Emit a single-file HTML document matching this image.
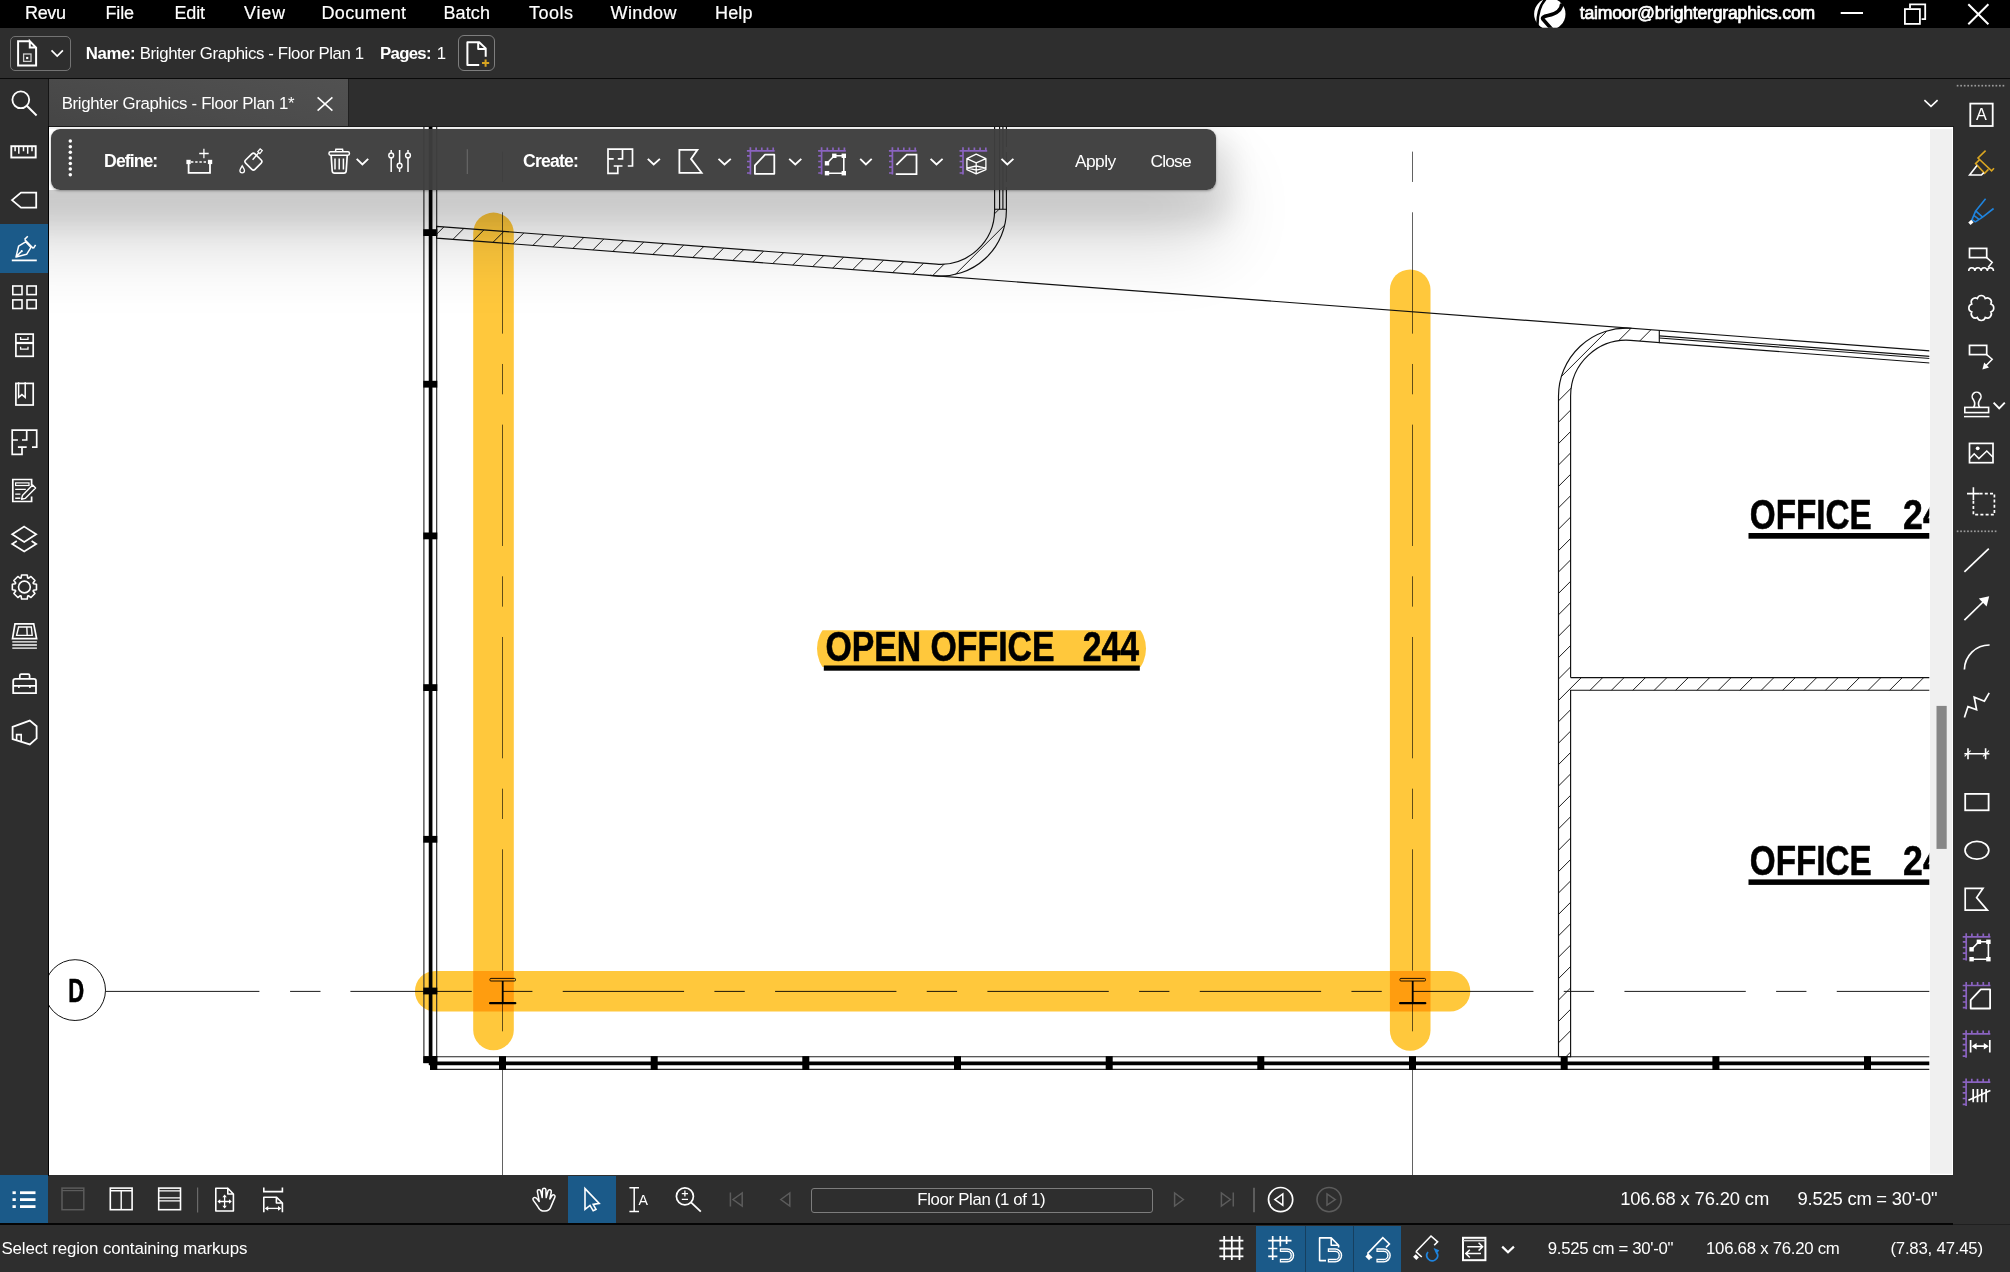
<!DOCTYPE html>
<html lang="en"><head><meta charset="utf-8"><title>Revu - Brighter Graphics - Floor Plan 1</title>
<style>
html,body{margin:0;padding:0}
body{width:2010px;height:1272px;overflow:hidden;background:#2e2e2e;position:relative;font-family:"Liberation Sans",sans-serif;color:#fff}
.a{position:absolute}
.t{position:absolute;line-height:1;white-space:pre}
#menubar{left:0;top:0;width:2010px;height:28px;background:#000}
#row2{left:0;top:28px;width:2010px;height:50px;background:#2e2e2e}
#sep1{left:0;top:78px;width:2010px;height:1.4px;background:#0a0a0a}
#tab{left:49px;top:79.2px;width:299.3px;height:47.8px;background:linear-gradient(15deg,#454545,#4b4b4b 45%,#515151);border-right:1px solid #202020;box-sizing:content-box}
#tabL{left:48px;top:79.2px;width:1px;height:47.8px;background:#151515}
.btn{border:1.2px solid #6b6b6b;border-radius:5px;box-sizing:border-box}
#doc{left:49px;top:127px;width:1904px;height:1048px;background:#fff;overflow:hidden}
#docborderL{left:48px;top:126px;width:1px;height:1050px;background:#000}
#docborderT{left:48px;top:126px;width:1906px;height:1px;background:#1a1a1a}
#fbar{left:51px;top:129.2px;width:1165px;height:60.4px;border-radius:9px;background:rgba(62,62,62,0.97);box-shadow:0 1px 2.5px rgba(0,0,0,0.35)}
#fshadow{left:-80px;top:2.2px;width:1247px;height:60.4px;border-radius:9px;box-shadow:0 20px 30px 14px rgba(0,0,0,0.115), 0 48px 74px 5px rgba(0,0,0,0.16)}
.blue{background:#1b5a89}
#navline{left:0;top:1223.3px;width:1953px;height:1.9px;background:#050505}
#navline2{left:1953px;top:1224.3px;width:57px;height:1.1px;background:#1f1f1f}
#ui{left:0;top:0;pointer-events:none}
</style></head><body>

<div class="a" id="menubar"></div><div class="a" id="row2"></div><div class="a" id="sep1"></div><div class="a" id="tab"></div><div class="a" id="tabL"></div>
<div class="a btn" style="left:10.1px;top:35.5px;width:61px;height:35px;border-width:1.4px;border-color:#737373"></div>
<div class="a btn" style="left:458.2px;top:35.4px;width:36.8px;height:35.6px;border-width:1.7px;border-color:#7e7e7e;border-radius:6px"></div>
<div class="a blue" style="left:0;top:224.3px;width:48px;height:48.3px"></div>
<div class="a blue" style="left:0;top:1175px;width:48.4px;height:48.5px"></div>
<div class="a blue" style="left:568px;top:1175.5px;width:48px;height:47.5px"></div>
<div class="a blue" style="left:1256.4px;top:1225.5px;width:145.1px;height:46.5px"></div>
<div class="a" style="left:1304.7px;top:1225.5px;width:1px;height:46.5px;background:#163f5f"></div>
<div class="a" style="left:1352.8px;top:1225.5px;width:1px;height:46.5px;background:#163f5f"></div>
<div class="a" id="navline"></div><div class="a" id="navline2"></div>
<div class="a" style="left:811.2px;top:1187.6px;width:341.8px;height:25px;border:1.7px solid #7d7d7d;border-radius:3px;box-sizing:border-box"></div>
<div class="a" id="docborderT"></div><div class="a" id="docborderL"></div>
<div class="a" id="doc">
<svg width="1904" height="1048" viewBox="49 127 1904 1048" style="position:absolute;left:0;top:0;display:block" font-family="'Liberation Sans',sans-serif">
<defs>
<clipPath id="cpPage"><rect x="49" y="127" width="1880.3" height="1048"/></clipPath>
<clipPath id="cpTop"><path d="M436.6 226.40 L936.43 264.15 A54.1 54.1 0 0 0 994.6 210.20 L994.6 209.2 L1006.4 209.2 L1006.4 210.20 A65.9 65.9 0 0 1 935.54 275.91 L436.6 238.10 Z"/></clipPath>
<clipPath id="cpR"><path d="M1558.5 1056.7 L1558.5 396.10 A68.0 68.0 0 0 1 1631.52 328.29 L1659.30 330.41 L1659.30 342.55 L1630.61 340.36 A55.9 55.9 0 0 0 1570.6 396.10 L1570.6 677.6 L1935 677.6 L1935 690.2 L1570.6 690.2 L1570.6 1056.7 Z"/></clipPath>
<clipPath id="cpHL"><rect x="800" y="630.3" width="360" height="36.6"/></clipPath>
</defs>
<rect x="49" y="127" width="1904" height="1048" fill="#fff"/>
<g clip-path="url(#cpPage)">
<g style="mix-blend-mode:multiply" stroke="#ffc83c" stroke-width="40.6" stroke-linecap="round" fill="none">
<path d="M493.5 232.9 L493.5 1029.9" style="mix-blend-mode:multiply"/>
<path d="M1410.2 289.7 L1410.2 1030.5" style="mix-blend-mode:multiply"/>
<path d="M435.2 991.2 L1450 991.2" style="mix-blend-mode:multiply"/>
<path d="M850.5 648.6 L1112.5 648.6" stroke-width="67" clip-path="url(#cpHL)"/>
</g>
<path d="M502.5 0 L502.5 1175" stroke="#000" stroke-width="0.62" stroke-dasharray="121.35 30.33 30.33 30.33" stroke-dashoffset="0.05" fill="none"/>
<path d="M1412.5 0 L1412.5 1175" stroke="#000" stroke-width="0.62" stroke-dasharray="121.35 30.33 30.33 30.33" stroke-dashoffset="0.05" fill="none"/>
<path d="M105.7 991.4 L259.4 991.4" stroke="#000" stroke-width="0.9" fill="none"/>
<path d="M350.4 991.4 L1935 991.4" stroke="#000" stroke-width="0.9" stroke-dasharray="121.35 30.33 30.33 30.33" fill="none"/>
<path d="M290.1 991.4 L320.5 991.4" stroke="#000" stroke-width="0.9" fill="none"/>
<circle cx="75.1" cy="990.1" r="30.4" fill="#fff" stroke="#111" stroke-width="1"/>
<text transform="translate(68.20,1001.90) scale(0.6673,1)" font-size="33.00" font-weight="bold" fill="#000" stroke="#000" stroke-width="0.6" stroke-linejoin="round" style="white-space:pre">D</text>
<g stroke="#000" fill="none">
<path d="M423.9 127 L423.9 1063 M436.7 127 L436.7 1057" stroke-width="1.1" stroke="#222"/>
<path d="M430.6 127 L430.6 1065" stroke-width="3.7"/>
<path d="M424 1056.7 L1935 1056.7 M431 1069.4 L1935 1069.4" stroke-width="1.1" stroke="#222"/>
<path d="M429 1063.3 L1935 1063.3" stroke-width="3.7"/>
</g>
<rect x="423.3" y="229.2" width="14" height="6.8" fill="#000"/>
<rect x="423.3" y="380.8" width="14" height="6.8" fill="#000"/>
<rect x="423.3" y="532.5" width="14" height="6.8" fill="#000"/>
<rect x="423.3" y="684.2" width="14" height="6.8" fill="#000"/>
<rect x="423.3" y="835.9" width="14" height="6.8" fill="#000"/>
<rect x="423.3" y="987.6" width="14" height="6.8" fill="#000"/>
<rect x="499.0" y="1056.2" width="7" height="13.8" fill="#000"/>
<rect x="650.7" y="1056.2" width="7" height="13.8" fill="#000"/>
<rect x="802.3" y="1056.2" width="7" height="13.8" fill="#000"/>
<rect x="954.0" y="1056.2" width="7" height="13.8" fill="#000"/>
<rect x="1105.7" y="1056.2" width="7" height="13.8" fill="#000"/>
<rect x="1257.3" y="1056.2" width="7" height="13.8" fill="#000"/>
<rect x="1409.0" y="1056.2" width="7" height="13.8" fill="#000"/>
<rect x="1560.7" y="1056.2" width="7" height="13.8" fill="#000"/>
<rect x="1712.4" y="1056.2" width="7" height="13.8" fill="#000"/>
<rect x="1864.0" y="1056.2" width="7" height="13.8" fill="#000"/>
<rect x="423.3" y="1056.2" width="14" height="7" fill="#000"/>
<rect x="430" y="1056.2" width="7.3" height="13.8" fill="#000"/>
<rect x="489.9" y="978.4" width="25.6" height="2.6" fill="none" stroke="#000" stroke-width="0.9" rx="1"/>
<path d="M490.1 1003.2 L515.3 1003.2" stroke="#000" stroke-width="2.2" stroke-linecap="round"/>
<path d="M502.7 981 L502.7 1003" stroke="#000" stroke-width="1.8"/>
<rect x="1399.9" y="978.4" width="25.6" height="2.6" fill="none" stroke="#000" stroke-width="0.9" rx="1"/>
<path d="M1400.1 1003.2 L1425.3 1003.2" stroke="#000" stroke-width="2.2" stroke-linecap="round"/>
<path d="M1412.7 981 L1412.7 1003" stroke="#000" stroke-width="1.8"/>
<g stroke="#111" stroke-width="1.15" fill="none">
<path d="M436.6 226.40 L936.43 264.15 A54.1 54.1 0 0 0 994.6 210.20 L994.6 209.2 L1006.4 209.2 L1006.4 210.20 A65.9 65.9 0 0 1 935.54 275.91 L436.6 238.10 Z"/>
<path d="M994.6 127 L994.6 209.2 M999.6 127 L999.6 209.2 M1002.9 127 L1002.9 209.2"/>
<path d="M1006.4 127 L1006.4 209.2" stroke-dasharray="30 5" stroke-dashoffset="10"/>
<path d="M930 275.35 L1935 351.23"/>
<path d="M1558.5 1056.7 L1558.5 396.10 A68.0 68.0 0 0 1 1631.52 328.29"/>
<path d="M1570.6 677.6 L1570.6 396.10 A55.9 55.9 0 0 1 1630.61 340.36 L1659.30 342.55 L1659.30 330.41"/>
<path d="M1659.30 335.91 L1935 356.73"/>
<path d="M1659.30 338.01 L1935 358.83"/>
<path d="M1659.30 342.56 L1935 363.38"/>
<path d="M1570.6 677.6 L1935 677.6 M1935 690.2 L1570.6 690.2 L1570.6 1056.7 L1558.5 1056.7"/>
</g>
<g clip-path="url(#cpTop)" stroke="#111" stroke-width="0.95">
<path d="M349.30 300 L499.30 150"/>
<path d="M370.80 300 L520.80 150"/>
<path d="M392.30 300 L542.30 150"/>
<path d="M413.80 300 L563.80 150"/>
<path d="M435.30 300 L585.30 150"/>
<path d="M456.80 300 L606.80 150"/>
<path d="M478.30 300 L628.30 150"/>
<path d="M499.80 300 L649.80 150"/>
<path d="M521.30 300 L671.30 150"/>
<path d="M542.80 300 L692.80 150"/>
<path d="M564.30 300 L714.30 150"/>
<path d="M585.80 300 L735.80 150"/>
<path d="M607.30 300 L757.30 150"/>
<path d="M628.80 300 L778.80 150"/>
<path d="M650.30 300 L800.30 150"/>
<path d="M671.80 300 L821.80 150"/>
<path d="M693.30 300 L843.30 150"/>
<path d="M714.80 300 L864.80 150"/>
<path d="M736.30 300 L886.30 150"/>
<path d="M757.80 300 L907.80 150"/>
<path d="M779.30 300 L929.30 150"/>
<path d="M800.80 300 L950.80 150"/>
<path d="M822.30 300 L972.30 150"/>
<path d="M843.80 300 L993.80 150"/>
<path d="M865.30 300 L1015.30 150"/>
<path d="M886.80 300 L1036.80 150"/>
<path d="M908.30 300 L1058.30 150"/>
<path d="M929.80 300 L1079.80 150"/>
<path d="M951.30 300 L1101.30 150"/>
<path d="M972.80 300 L1122.80 150"/>
<path d="M994.30 300 L1144.30 150"/>
<path d="M1015.80 300 L1165.80 150"/>
</g>
<g clip-path="url(#cpR)" stroke="#111" stroke-width="0.95">
<path d="M1550 323.70 L1573.70 300"/>
<path d="M1550 345.10 L1595.10 300"/>
<path d="M1550 366.50 L1616.50 300"/>
<path d="M1550 387.90 L1637.90 300"/>
<path d="M1550 409.30 L1659.30 300"/>
<path d="M1550 430.70 L1680.70 300"/>
<path d="M1550 452.10 L1702.10 300"/>
<path d="M1550 473.50 L1723.50 300"/>
<path d="M1550 494.90 L1744.90 300"/>
<path d="M1550 516.30 L1766.30 300"/>
<path d="M1550 537.70 L1787.70 300"/>
<path d="M1550 559.10 L1809.10 300"/>
<path d="M1550 580.50 L1830.50 300"/>
<path d="M1550 601.90 L1851.90 300"/>
<path d="M1550 623.30 L1873.30 300"/>
<path d="M1550 644.70 L1894.70 300"/>
<path d="M1550 666.10 L1916.10 300"/>
<path d="M1550 687.50 L1937.50 300"/>
<path d="M1550 708.90 L1958.90 300"/>
<path d="M1550 730.30 L1980.30 300"/>
<path d="M1550 751.70 L2001.70 300"/>
<path d="M1550 773.10 L2023.10 300"/>
<path d="M1550 794.50 L2044.50 300"/>
<path d="M1550 815.90 L2065.90 300"/>
<path d="M1550 837.30 L2087.30 300"/>
<path d="M1550 858.70 L2108.70 300"/>
<path d="M1550 880.10 L2130.10 300"/>
<path d="M1550 901.50 L2151.50 300"/>
<path d="M1550 922.90 L2172.90 300"/>
<path d="M1550 944.30 L2194.30 300"/>
<path d="M1550 965.70 L2215.70 300"/>
<path d="M1550 987.10 L2237.10 300"/>
<path d="M1550 1008.50 L2258.50 300"/>
<path d="M1550 1029.90 L2279.90 300"/>
<path d="M1550 1051.30 L2301.30 300"/>
<path d="M1550 1072.70 L2322.70 300"/>
<path d="M1550 1094.10 L2344.10 300"/>
<path d="M1550 1115.50 L2365.50 300"/>
<path d="M1550 1136.90 L2386.90 300"/>
<path d="M1550 1158.30 L2408.30 300"/>
<path d="M1550 1179.70 L2429.70 300"/>
<path d="M1550 1201.10 L2451.10 300"/>
<path d="M1550 1222.50 L2472.50 300"/>
<path d="M1550 1243.90 L2493.90 300"/>
<path d="M1550 1265.30 L2515.30 300"/>
<path d="M1550 1286.70 L2536.70 300"/>
<path d="M1550 1308.10 L2558.10 300"/>
<path d="M1550 1329.50 L2579.50 300"/>
<path d="M1550 1350.90 L2600.90 300"/>
<path d="M1550 1372.30 L2622.30 300"/>
<path d="M1550 1393.70 L2643.70 300"/>
<path d="M1550 1415.10 L2665.10 300"/>
<path d="M1550 1436.50 L2686.50 300"/>
<path d="M1550 1457.90 L2707.90 300"/>
<path d="M1550 1479.30 L2729.30 300"/>
<path d="M1550 1500.70 L2750.70 300"/>
</g>
<text transform="translate(825.40,660.60) scale(0.7938,1)" font-size="42.60" font-weight="bold" fill="#000" stroke="#000" stroke-width="0.6" stroke-linejoin="round" style="white-space:pre">OPEN OFFICE   244</text>
<rect x="823.8" y="665.5" width="316" height="5.2" fill="#000"/>
<text transform="translate(1749.80,529.10) scale(0.7810,1)" font-size="42.60" font-weight="bold" fill="#000" stroke="#000" stroke-width="0.6" stroke-linejoin="round" style="white-space:pre">OFFICE</text>
<text transform="translate(1903.10,529.10) scale(0.8360,1)" font-size="42.60" font-weight="bold" fill="#000" stroke="#000" stroke-width="0.6" stroke-linejoin="round" style="white-space:pre">245</text>
<rect x="1748.5" y="533" width="200" height="5.7" fill="#000"/>
<text transform="translate(1749.80,875.10) scale(0.7810,1)" font-size="42.60" font-weight="bold" fill="#000" stroke="#000" stroke-width="0.6" stroke-linejoin="round" style="white-space:pre">OFFICE</text>
<text transform="translate(1903.10,875.10) scale(0.8360,1)" font-size="42.60" font-weight="bold" fill="#000" stroke="#000" stroke-width="0.6" stroke-linejoin="round" style="white-space:pre">246</text>
<rect x="1748.5" y="879.4" width="200" height="5.5" fill="#000"/>
</g>
<rect x="1930" y="129" width="22" height="1044.8" fill="#f0f0f0"/>
<rect x="1936.5" y="705.9" width="10.2" height="143" fill="#878787"/>
</svg>
</div>
<div class="a" style="left:49px;top:127px;width:1904px;height:1048px;overflow:hidden;pointer-events:none"><div class="a" id="fshadow"></div><div class="a" id="fbar" style="left:2px;top:2.2px"></div></div>
<svg class="a" id="ui" width="2010" height="1272" viewBox="0 0 2010 1272" fill="none" stroke="#fff" stroke-width="1.6" stroke-linecap="butt" stroke-linejoin="miter">
<defs><clipPath id="cpLogo"><rect x="1525" y="0" width="50" height="27.8"/></clipPath></defs>
<g clip-path="url(#cpLogo)"><circle cx="1549.8" cy="14" r="15.7" fill="#fff" stroke="none"/>
<path d="M1546.5 -2 C1539.5 5 1536.8 16 1537.6 29" stroke="#000" stroke-width="2.6"/>
<path d="M1561.8 3.5 C1561.5 10.5 1556 14 1548 15.6 C1543.5 16.5 1541.6 17.6 1543 19.4 L1552 29.5" stroke="#000" stroke-width="3.6" stroke-linejoin="round"/>
</g>
<path d="M1840.7 13 L1863 13" stroke-width="2"/>
<rect x="1904.9" y="9.1" width="15" height="14.8" stroke-width="1.8"/>
<path d="M1910 8.2 L1910 4.3 L1925.2 4.3 L1925.2 19.2 L1921.6 19.2" stroke-width="1.8"/>
<path d="M1968.3 4.2 L1988.4 24.2 M1988.4 4.2 L1968.3 24.2" stroke-width="2"/>
<path d="M29.2 41.2 L18.1 41.2 L18.1 65.4 L36.1 65.4 L36.1 47.6 L29.8 41.2 L29.8 47.6 L36.1 47.6" stroke-width="2" stroke-linejoin="miter"/>
<rect x="23.6" y="54" width="7.4" height="7.4" stroke="#d0d0d0" stroke-width="1.3"/>
<rect x="26.1" y="56.9" width="2.2" height="2.2" fill="#fff" stroke="none"/>
<path d="M51.5 50.4 L57.2 56.1 L62.9 50.4" stroke-width="1.7"/>
<path d="M479.2 65.1 L467.4 65.1 L467.4 42.2 L479.2 42.2 L485.7 48.4 L485.7 56.8 M478.2 42.6 L478.2 49 L485.3 49" stroke-width="2" stroke-linejoin="round"/>
<path d="M482 63 L489.2 63 M485.6 59.4 L485.6 66.8" stroke="#d9a521" stroke-width="2"/>
<circle cx="20.8" cy="99.8" r="8.4" stroke-width="1.8"/>
<path d="M26.8 105.8 L36.6 115.5" stroke-width="1.9"/>
<path d="M317.6 97.4 L332.4 110.6 M332.4 97.4 L317.6 110.6" stroke-width="1.6"/>
<path d="M1924.4 100.2 L1931.0 106.4 L1937.6 100.2" stroke-width="1.6"/>
<rect x="11.3" y="146.2" width="24.4" height="11.3" stroke-width="1.9"/>
<path d="M15.1 146.2 L15.1 151.2 M18.8 146.2 L18.8 153.8 M23.5 146.2 L23.5 151.2 M27.7 146.2 L27.7 153.8 M32 146.2 L32 151.2" stroke-width="1.5"/>
<path d="M12 200.1 L21 192.6 L36.2 192.6 L36.2 207.7 L21 207.7 Z" stroke-width="1.8" stroke-linejoin="miter"/>
<path d="M11.8 260.4 L36.8 260.4" stroke-width="1.8"/>
<path d="M16 257 L18.6 246.2 L25.6 241.8 L31 247.4 L26.6 254.3 Z M16.4 256.6 L21 251.8" stroke-width="1.5" stroke-linejoin="round"/>
<path d="M24.6 239.4 L33.4 248.4 M27.8 236.3 L24.6 239.4 M35.6 244.8 L33.4 248.4" stroke-width="1.5"/>
<circle cx="21.7" cy="251.2" r="1.1" fill="#fff" stroke="none"/>
<rect x="12.8" y="286.0" width="9.2" height="8.6" stroke-width="1.6"/>
<rect x="27.0" y="286.0" width="9.2" height="8.6" stroke-width="1.6"/>
<rect x="12.8" y="299.9" width="9.2" height="8.6" stroke-width="1.6"/>
<rect x="27.0" y="299.9" width="9.2" height="8.6" stroke-width="1.6"/>
<rect x="15.9" y="334.1" width="17.3" height="22.2" stroke-width="1.7"/>
<path d="M15.9 343 L33.2 343" stroke-width="2.2"/>
<path d="M20.6 337 L20.6 339.3 L28 339.3 L28 337 M20.6 346.8 L20.6 349.1 L28 349.1 L28 346.8" stroke-width="1.3"/>
<rect x="15.9" y="383.4" width="17.3" height="21.6" stroke-width="1.7"/>
<path d="M18.6 382.2 L18.6 397.4 L21.9 394.6 L25.2 397.4 L25.2 382.2" stroke-width="1.5"/>
<path d="M32.0 447.1 L36.7 447.1 L36.7 430.2 L12.2 430.2 L12.2 454.4 L22.0 454.4 L22.0 447.1 L26.7 447.1 M22.0 447.1 L17.9 447.1 M26.7 430.2 L26.7 440.0 L22.0 440.0 M12.2 440.0 L17.9 440.0" stroke-width="1.7"/>
<path d="M31.6 485.5 L31.6 479.5 L12.8 479.5 L12.8 501.5 L31.6 501.5 L31.6 496.5" stroke-width="1.7"/>
<rect x="15.6" y="482.9" width="13.4" height="2.6" stroke-width="1.2"/>
<path d="M15.2 489.4 L25.8 489.4 M15.2 494.1 L20.4 494.1 M15.2 498.2 L20.4 498.2" stroke-width="1.4"/>
<path d="M21.6 499.2 L22.4 495.6 L32.6 485 L35.6 488 L25.2 498.4 Z" stroke-width="1.4" stroke-linejoin="round"/>
<path d="M24.2 526.6 L36.2 534.3 L24.2 541.9 L12.2 534.3 Z" stroke-width="1.7"/>
<path d="M16.8 541 L12.2 544 L24.2 551.4 L36.2 544 L31.6 541" stroke-width="1.7"/>
<path d="M21.57 574.93 L27.23 574.93 L27.69 577.98 L28.45 578.30 L30.94 576.46 L34.94 580.46 L33.10 582.95 L33.42 583.71 L36.47 584.17 L36.47 589.83 L33.42 590.29 L33.10 591.05 L34.94 593.54 L30.94 597.54 L28.45 595.70 L27.69 596.02 L27.23 599.07 L21.57 599.07 L21.11 596.02 L20.35 595.70 L17.86 597.54 L13.86 593.54 L15.70 591.05 L15.38 590.29 L12.33 589.83 L12.33 584.17 L15.38 583.71 L15.70 582.95 L13.86 580.46 L17.86 576.46 L20.35 578.30 L21.11 577.98 Z" stroke-width="1.6" stroke-linejoin="round"/>
<circle cx="24.4" cy="587.0" r="5.9" stroke-width="1.6"/>
<path d="M15 623.9 L33.7 623.9 L36.6 638.6 L12.5 638.6 Z" stroke-width="1.7"/>
<path d="M18.6 627 L31.3 627 L32.2 635.4 L16.6 635.4 Z M26.8 627 L27.2 635.4" stroke-width="1.4"/>
<path d="M12.3 641.9 L36.9 641.9 M12.3 645 L36.9 645 M12.3 648.1 L36.9 648.1" stroke-width="1.4"/>
<path d="M13.2 693.2 L13.2 681 Q13.2 678.8 15.4 678.8 L33.8 678.8 Q36 678.8 36 681 L36 693.2 Z" stroke-width="1.8"/>
<path d="M19.8 678.6 L19.8 675.6 Q19.8 674.2 21.2 674.2 L28.2 674.2 Q29.6 674.2 29.6 675.6 L29.6 678.6" stroke-width="1.7"/>
<path d="M13.2 685.9 L36 685.9 M18.9 685.9 L18.9 688 M29.9 685.9 L29.9 688" stroke-width="1.6"/>
<path d="M12.6 726.8 L29.8 720.6 L36.6 726.2 L36.6 738.4 L29.8 744.4 L12.6 739 Z" stroke-width="1.8" stroke-linejoin="miter"/>
<path d="M16.6 740 L16.6 734.6 L21.2 734.6 L21.2 741.4" stroke-width="1.6"/>
<rect x="1956.75" y="84.85" width="1.7" height="1.7" fill="#9a9a9a" stroke="none"/><rect x="1960.27" y="84.85" width="1.7" height="1.7" fill="#9a9a9a" stroke="none"/><rect x="1963.80" y="84.85" width="1.7" height="1.7" fill="#9a9a9a" stroke="none"/><rect x="1967.32" y="84.85" width="1.7" height="1.7" fill="#9a9a9a" stroke="none"/><rect x="1970.84" y="84.85" width="1.7" height="1.7" fill="#9a9a9a" stroke="none"/><rect x="1974.37" y="84.85" width="1.7" height="1.7" fill="#9a9a9a" stroke="none"/><rect x="1977.89" y="84.85" width="1.7" height="1.7" fill="#9a9a9a" stroke="none"/><rect x="1981.41" y="84.85" width="1.7" height="1.7" fill="#9a9a9a" stroke="none"/><rect x="1984.93" y="84.85" width="1.7" height="1.7" fill="#9a9a9a" stroke="none"/><rect x="1988.46" y="84.85" width="1.7" height="1.7" fill="#9a9a9a" stroke="none"/><rect x="1991.98" y="84.85" width="1.7" height="1.7" fill="#9a9a9a" stroke="none"/><rect x="1995.50" y="84.85" width="1.7" height="1.7" fill="#9a9a9a" stroke="none"/><rect x="1999.03" y="84.85" width="1.7" height="1.7" fill="#9a9a9a" stroke="none"/><rect x="2002.55" y="84.85" width="1.7" height="1.7" fill="#9a9a9a" stroke="none"/>
<rect x="1956.75" y="530.45" width="1.7" height="1.7" fill="#9a9a9a" stroke="none"/><rect x="1960.20" y="530.45" width="1.7" height="1.7" fill="#9a9a9a" stroke="none"/><rect x="1963.66" y="530.45" width="1.7" height="1.7" fill="#9a9a9a" stroke="none"/><rect x="1967.11" y="530.45" width="1.7" height="1.7" fill="#9a9a9a" stroke="none"/><rect x="1970.57" y="530.45" width="1.7" height="1.7" fill="#9a9a9a" stroke="none"/><rect x="1974.02" y="530.45" width="1.7" height="1.7" fill="#9a9a9a" stroke="none"/><rect x="1977.48" y="530.45" width="1.7" height="1.7" fill="#9a9a9a" stroke="none"/><rect x="1980.93" y="530.45" width="1.7" height="1.7" fill="#9a9a9a" stroke="none"/><rect x="1984.39" y="530.45" width="1.7" height="1.7" fill="#9a9a9a" stroke="none"/><rect x="1987.84" y="530.45" width="1.7" height="1.7" fill="#9a9a9a" stroke="none"/><rect x="1991.30" y="530.45" width="1.7" height="1.7" fill="#9a9a9a" stroke="none"/><rect x="1994.75" y="530.45" width="1.7" height="1.7" fill="#9a9a9a" stroke="none"/>
<rect x="1970.3" y="103.6" width="22.4" height="22.4" stroke-width="1.8"/>
<text x="1981.4" y="120.2" font-size="16.2" fill="#fff" stroke="none" text-anchor="middle" font-family="'Liberation Sans',sans-serif">A</text>
<path d="M1985.6 150.6 L1978 158 L1991.6 170.8 L1994 168.2 M1979.6 159.6 L1975.6 163.6 L1984.6 173.4 L1988.4 169.4" stroke="#d9a521" stroke-width="1.6"/>
<path d="M1977 165.4 L1969.6 175 L1981.4 175 L1983.8 172.6" stroke-width="1.6"/>
<path d="M1985.6 198.8 L1975.7 210.9 L1982.6 217.2 L1993.6 208.5 M1975.7 210.9 L1972 219.6 L1975.4 221.8 L1982.6 217.2 M1973.8 215.4 L1979 219.4" stroke="#1f84de" stroke-width="1.6" stroke-linejoin="round"/>
<path d="M1972.4 221 L1969.4 223.8" stroke-width="3.4"/>
<rect x="1969.5" y="248.4" width="17.2" height="9.2" stroke-width="1.7"/>
<path d="M1986.7 257.6 L1992.2 262.4 L1988.2 267.2" stroke-width="1.5"/>
<path d="M1968.7 271 a3.1 3.3 0 0 1 6.2 0 a3.1 3.3 0 0 1 6.2 0 a3.1 3.3 0 0 1 6.2 0 a3.1 3.3 0 0 1 6.2 0" stroke-width="1.5"/>
<path d="M1977.36 298.48 A4.1 4.1 0 0 1 1985.24 298.48 A4.1 4.1 0 0 1 1990.82 304.06 A4.1 4.1 0 0 1 1990.82 311.94 A4.1 4.1 0 0 1 1985.24 317.52 A4.1 4.1 0 0 1 1977.36 317.52 A4.1 4.1 0 0 1 1971.78 311.94 A4.1 4.1 0 0 1 1971.78 304.06 A4.1 4.1 0 0 1 1977.36 298.48 Z" stroke-width="1.6"/>
<rect x="1969.5" y="345.4" width="17.2" height="9.2" stroke-width="1.7"/>
<path d="M1986.7 354.6 L1992.2 359.2 L1985.4 366.2" stroke-width="1.5"/>
<path d="M1982.4 369.4 L1984.2 362.6 L1989 367.4 Z" fill="#fff" stroke="none"/>
<path d="M1973.6 407.2 C1975.8 404 1974.6 401.6 1973.4 399.6 A4.4 4.4 0 1 1 1979.8 399.6 C1978.6 401.6 1977.4 404 1979.6 407.2" stroke-width="1.6"/>
<rect x="1964.8" y="407.4" width="23.8" height="5.2" stroke-width="1.6"/>
<path d="M1964 416.6 L1989.4 416.6" stroke-width="1.5"/>
<path d="M1993.6 402.7 L1999.2 408.3 L2004.8 402.7" stroke-width="1.9"/>
<rect x="1969.5" y="443.4" width="23.5" height="19.3" stroke-width="1.7"/>
<circle cx="1977.7" cy="448.3" r="1.9" fill="#fff" stroke="none"/>
<path d="M1969.5 458.8 L1974.2 453.8 L1978.9 458.6 L1986.8 451 L1993 457.2" stroke-width="1.5"/>
<path d="M1967 493.6 L1979.6 493.6 M1973.4 487.2 L1973.4 500" stroke-width="1.6"/>
<path d="M1979.6 493.6 L1994.4 493.6 L1994.4 514.6 L1973.4 514.6 L1973.4 500" stroke-width="1.7" stroke-dasharray="3 2.2"/>
<path d="M1964.4 571.8 L1988.8 548.7" stroke-width="1.7"/>
<path d="M1964.4 620.2 L1983 602" stroke-width="1.7"/>
<path d="M1989.2 596.2 L1986.6 606.4 L1978.8 598.6 Z" fill="#fff" stroke="none"/>
<path d="M1964.4 669.6 A25 25 0 0 1 1989.6 645" stroke-width="1.7"/>
<path d="M1964.4 717.6 L1968 706.6 L1976.6 709.8 L1974.2 697.2 L1984.4 701.2 L1989.2 692.8" stroke-width="1.7" stroke-linejoin="miter"/>
<path d="M1964.4 753.8 L1989.4 753.8 M1968 748.3 L1968 759.3 M1985.6 748.3 L1985.6 759.3" stroke-width="1.6"/>
<path d="M1964.6 756.4 L1970.6 750.6 M1983 756.4 L1989 750.6" stroke-width="1.1"/>
<rect x="1965.2" y="793.9" width="23.4" height="16.4" stroke-width="1.8"/>
<ellipse cx="1976.9" cy="850.3" rx="11.9" ry="8.9" stroke-width="1.7"/>
<path d="M1965.2 888.3 L1983 888.3 L1976.6 897.6 L1987.4 910.2 L1965.2 910.2 Z" stroke-width="1.7"/>
<path d="M1962.7 936.8 L1990.4 936.8 M1966.2 933.2 L1966.2 960.6 M1971.9 936.8 L1971.9 933.4 M1977.6 936.8 L1977.6 933.4 M1983.3 936.8 L1983.3 933.4 M1989.0 936.8 L1989.0 933.4 M1966.2 941.8 L1962.8 941.8 M1966.2 947.5 L1962.8 947.5 M1966.2 953.2 L1962.8 953.2 M1966.2 959.0 L1962.8 959.0" stroke="#8a63c0" stroke-width="1.7"/><path d="M1971.6 949.3 L1978.9 941.8 L1988.4 941.8 L1988.4 959.2 L1971.6 959.2" stroke-width="1.6"/><rect x="1969.4" y="947.1" width="4.4" height="4.4" fill="#fff" stroke="none"/><rect x="1976.7" y="939.6" width="4.4" height="4.4" fill="#fff" stroke="none"/><rect x="1986.2" y="939.6" width="4.4" height="4.4" fill="#fff" stroke="none"/><rect x="1986.2" y="957.0" width="4.4" height="4.4" fill="#fff" stroke="none"/><rect x="1969.4" y="957.0" width="4.4" height="4.4" fill="#fff" stroke="none"/>
<path d="M1962.7 985.5 L1990.4 985.5 M1966.2 981.9 L1966.2 1009.3 M1971.9 985.5 L1971.9 982.1 M1977.6 985.5 L1977.6 982.1 M1983.3 985.5 L1983.3 982.1 M1989.0 985.5 L1989.0 982.1 M1966.2 990.5 L1962.8 990.5 M1966.2 996.2 L1962.8 996.2 M1966.2 1002.0 L1962.8 1002.0 M1966.2 1007.7 L1962.8 1007.7" stroke="#8a63c0" stroke-width="1.7"/><path d="M1970.7 1000.1 L1980.8 989.4 L1990.1 989.4 L1990.1 1008.5 L1970.7 1008.5 Z" stroke-width="1.8" stroke-linejoin="round"/>
<path d="M1962.6 1033.9 L1990.3 1033.9 M1966.1 1030.3 L1966.1 1057.7 M1971.8 1033.9 L1971.8 1030.5 M1977.5 1033.9 L1977.5 1030.5 M1983.2 1033.9 L1983.2 1030.5 M1988.9 1033.9 L1988.9 1030.5 M1966.1 1038.9 L1962.7 1038.9 M1966.1 1044.6 L1962.7 1044.6 M1966.1 1050.4 L1962.7 1050.4 M1966.1 1056.1 L1962.7 1056.1" stroke="#8a63c0" stroke-width="1.7"/>
<path d="M1970.6 1039.9 L1970.6 1052.6 M1989.8 1039.9 L1989.8 1052.6 M1975 1046.2 L1985.4 1046.2" stroke-width="1.7"/>
<path d="M1971.6 1046.2 L1976.6 1043 L1976.6 1049.4 Z M1988.8 1046.2 L1983.8 1043 L1983.8 1049.4 Z" fill="#fff" stroke="none"/>
<path d="M1962.6 1082.1 L1990.3 1082.1 M1966.1 1078.5 L1966.1 1105.9 M1971.8 1082.1 L1971.8 1078.7 M1977.5 1082.1 L1977.5 1078.7 M1983.2 1082.1 L1983.2 1078.7 M1988.9 1082.1 L1988.9 1078.7 M1966.1 1087.0 L1962.7 1087.0 M1966.1 1092.8 L1962.7 1092.8 M1966.1 1098.5 L1962.7 1098.5 M1966.1 1104.3 L1962.7 1104.3" stroke="#8a63c0" stroke-width="1.7"/>
<path d="M1973.2 1089 L1973.2 1102.2 M1977.5 1089 L1977.5 1102.2 M1981.8 1089 L1981.8 1102.2 M1986.1 1089 L1986.1 1102.2" stroke-width="1.7"/>
<path d="M1968.4 1100.3 L1990.4 1090.5" stroke-width="1.6"/>
<circle cx="70.3" cy="141.1" r="1.75" fill="#fff" stroke="none"/>
<circle cx="70.3" cy="146.7" r="1.75" fill="#fff" stroke="none"/>
<circle cx="70.3" cy="152.3" r="1.75" fill="#fff" stroke="none"/>
<circle cx="70.3" cy="157.9" r="1.75" fill="#fff" stroke="none"/>
<circle cx="70.3" cy="163.5" r="1.75" fill="#fff" stroke="none"/>
<circle cx="70.3" cy="169.1" r="1.75" fill="#fff" stroke="none"/>
<circle cx="70.3" cy="174.7" r="1.75" fill="#fff" stroke="none"/>
<path d="M188.6 164 L188.6 172.8 L210 172.8 L210 164" stroke-width="1.8"/>
<path d="M191 161.9 L207.8 161.9" stroke-width="1.5" stroke-dasharray="2.4 1.8"/>
<rect x="186.4" y="159.8" width="4.3" height="4.3" fill="#fff" stroke="none"/><rect x="207.9" y="159.8" width="4.3" height="4.3" fill="#fff" stroke="none"/>
<path d="M199.2 153.5 L208.7 153.5 M203.9 148.7 L203.9 158.2" stroke-width="1.3"/>
<rect x="-6.6" y="-6.6" width="13.2" height="13.2" rx="2.2" transform="translate(253.4 161.6) rotate(45)" stroke-width="1.6"/>
<path d="M252.6 159.8 L259 152.4" stroke-width="1.4"/>
<rect x="-1.9" y="-1.4" width="3.8" height="2.8" transform="translate(260 151.2) rotate(-50)" stroke-width="1.2"/>
<path d="M242.2 165.8 C240.8 168.2 239.9 169.4 239.9 170.6 A2.3 2.3 0 0 0 244.5 170.6 C244.5 169.4 243.6 168.2 242.2 165.8 Z" stroke-width="1.3"/>
<path d="M331.2 156 L332.2 171 Q332.4 173.2 334.6 173.2 L343.8 173.2 Q346 173.2 346.2 171 L347.2 156" stroke-width="1.7"/>
<rect x="329" y="151.8" width="20.4" height="3.4" rx="1.4" stroke-width="1.5"/>
<path d="M335.4 151.6 L335.9 149.2 L342.5 149.2 L343 151.6" stroke-width="1.5"/>
<path d="M335 158.4 L335 169.6 M339.2 158.4 L339.2 169.6 M343.4 158.4 L343.4 169.6" stroke-width="1.5"/>
<path d="M356.7 158.9 L362.4 164.5 L368.2 158.9" stroke-width="1.9"/>
<path d="M391.2 149.9 L391.2 152.8 M391.2 158 L391.2 171.9 M399.6 149.9 L399.6 163.1 M399.6 168.3 L399.6 171.9 M408 149.9 L408 152.8 M408 158 L408 171.9" stroke-width="1.5"/>
<circle cx="391.2" cy="155.4" r="2.4" stroke-width="1.4"/><circle cx="399.6" cy="165.7" r="2.4" stroke-width="1.4"/><circle cx="408" cy="155.4" r="2.4" stroke-width="1.4"/>
<path d="M467.3 149.2 L467.3 174" stroke="#6a6a6a" stroke-width="1.1"/>
<path d="M627.8 166.0 L632.5 166.0 L632.5 149.1 L608.0 149.1 L608.0 173.3 L617.8 173.3 L617.8 166.0 L622.5 166.0 M617.8 166.0 L613.7 166.0 M622.5 149.1 L622.5 158.9 L617.8 158.9 M608.0 158.9 L613.7 158.9" stroke-width="1.7"/>
<path d="M647.8 158.9 L653.7 164.5 L659.9 158.9" stroke-width="1.9"/>
<path d="M679.4 149.8 L697.4 149.8 L691 158.9 L701.6 172.8 L679.4 172.8 Z" stroke-width="1.8"/>
<path d="M718.5 158.9 L724.5 164.5 L730.8 158.9" stroke-width="1.9"/>
<path d="M746.9 150.8 L774.6 150.8 M750.4 147.2 L750.4 174.6 M756.1 150.8 L756.1 147.4 M761.8 150.8 L761.8 147.4 M767.5 150.8 L767.5 147.4 M773.2 150.8 L773.2 147.4 M750.4 155.8 L747.0 155.8 M750.4 161.5 L747.0 161.5 M750.4 167.2 L747.0 167.2 M750.4 173.0 L747.0 173.0" stroke="#8a63c0" stroke-width="1.7"/><path d="M754.9 165.4 L765.0 154.7 L774.3 154.7 L774.3 173.8 L754.9 173.8 Z" stroke-width="1.8" stroke-linejoin="round"/>
<path d="M789.2 158.9 L795.3 164.5 L801.3 158.9" stroke-width="1.9"/>
<path d="M818.1 150.8 L845.8 150.8 M821.6 147.2 L821.6 174.6 M827.3 150.8 L827.3 147.4 M833.0 150.8 L833.0 147.4 M838.7 150.8 L838.7 147.4 M844.4 150.8 L844.4 147.4 M821.6 155.8 L818.2 155.8 M821.6 161.5 L818.2 161.5 M821.6 167.2 L818.2 167.2 M821.6 173.0 L818.2 173.0" stroke="#8a63c0" stroke-width="1.7"/><path d="M827.0 163.3 L834.3 155.8 L843.8 155.8 L843.8 173.2 L827.0 173.2" stroke-width="1.6"/><rect x="824.8" y="161.1" width="4.4" height="4.4" fill="#fff" stroke="none"/><rect x="832.1" y="153.6" width="4.4" height="4.4" fill="#fff" stroke="none"/><rect x="841.6" y="153.6" width="4.4" height="4.4" fill="#fff" stroke="none"/><rect x="841.6" y="171.0" width="4.4" height="4.4" fill="#fff" stroke="none"/><rect x="824.8" y="171.0" width="4.4" height="4.4" fill="#fff" stroke="none"/>
<path d="M860.2 158.9 L865.9 164.5 L871.7 158.9" stroke-width="1.9"/>
<path d="M888.9 150.8 L916.6 150.8 M892.4 147.2 L892.4 174.6 M898.1 150.8 L898.1 147.4 M903.8 150.8 L903.8 147.4 M909.5 150.8 L909.5 147.4 M915.2 150.8 L915.2 147.4 M892.4 155.8 L889.0 155.8 M892.4 161.5 L889.0 161.5 M892.4 167.2 L889.0 167.2 M892.4 173.0 L889.0 173.0" stroke="#8a63c0" stroke-width="1.7"/><path d="M896.4 164.8 L906.8 154.7 L916.5 154.7 L916.5 174.1 L895.8 174.1" stroke-width="1.8"/>
<path d="M930.6 158.9 L936.5 164.5 L942.6 158.9" stroke-width="1.9"/>
<path d="M959.5 150.8 L987.2 150.8 M963.0 147.2 L963.0 174.6 M968.7 150.8 L968.7 147.4 M974.4 150.8 L974.4 147.4 M980.1 150.8 L980.1 147.4 M985.8 150.8 L985.8 147.4 M963.0 155.8 L959.6 155.8 M963.0 161.5 L959.6 161.5 M963.0 167.2 L959.6 167.2 M963.0 173.0 L959.6 173.0" stroke="#8a63c0" stroke-width="1.7"/><path d="M976.2 154.1 L985.9 158.7 L985.9 169.7 L976.2 173.8 L966.9 169.7 L966.9 158.7 Z M966.9 158.7 L976.2 162.8 L985.9 158.7 M976.2 162.8 L976.2 173.8 M966.9 167.9 L976.2 170.2 L985.9 167.9 M966.9 168.2 L976.2 166.0 L985.9 168.2" stroke-width="1.3" stroke-linejoin="round"/>
<path d="M1001.5 158.9 L1007.3 164.5 L1013.4 158.9" stroke-width="1.9"/>
<rect x="12.5" y="1191.3" width="3.3" height="2.8" fill="#fff" stroke="none"/><rect x="20" y="1191.3" width="15.5" height="2.8" fill="#fff" stroke="none"/>
<rect x="12.5" y="1198.2" width="3.3" height="2.8" fill="#fff" stroke="none"/><rect x="20" y="1198.2" width="15.5" height="2.8" fill="#fff" stroke="none"/>
<rect x="12.5" y="1205.2" width="3.3" height="2.8" fill="#fff" stroke="none"/><rect x="20" y="1205.2" width="15.5" height="2.8" fill="#fff" stroke="none"/>
<rect x="62" y="1188.1" width="21.8" height="21.6" stroke="#5c5c5c" stroke-width="1.5"/>
<path d="M62 1190.6 L83.8 1190.6" stroke="#5c5c5c" stroke-width="1.2"/>
<rect x="110.3" y="1188.1" width="21.8" height="21.6" stroke-width="1.6"/>
<path d="M110.3 1190.8 L132.1 1190.8 M121.2 1190.8 L121.2 1209.7" stroke-width="1.4"/>
<rect x="158.7" y="1188.1" width="21.8" height="21.6" stroke-width="1.6"/>
<path d="M158.7 1190.8 L180.5 1190.8 M158.7 1197.8 L180.5 1197.8 M158.7 1200.8 L180.5 1200.8" stroke-width="1.3"/>
<path d="M197.6 1187.4 L197.6 1212.4" stroke="#6a6a6a" stroke-width="1.2"/>
<path d="M227.8 1188.2 L215.8 1188.2 L215.8 1211 L233.4 1211 L233.4 1194 L227.8 1188.2 L227.8 1194 L233.4 1194" stroke-width="1.6" stroke-linejoin="round"/>
<path d="M224.6 1195.6 L224.6 1207.4 M218.6 1201.5 L230.6 1201.5" stroke-width="1.3"/>
<path d="M224.6 1194.4 L222.4 1197.2 L226.8 1197.2 Z M224.6 1208.6 L222.4 1205.8 L226.8 1205.8 Z M217.4 1201.5 L220.2 1199.3 L220.2 1203.7 Z M231.8 1201.5 L229 1199.3 L229 1203.7 Z" fill="#fff" stroke="none"/>
<path d="M263.8 1187.4 L263.8 1191.6 L282.4 1191.6 L282.4 1187.4" stroke-width="1.6"/>
<path d="M263.8 1212.2 L263.8 1197.2 L276.4 1197.2 L282.4 1203 L282.4 1212.2 M276.4 1197.2 L276.4 1203 L282.4 1203" stroke-width="1.6" stroke-linejoin="round"/>
<path d="M267.4 1208.4 L278.8 1208.4" stroke-width="1.3"/>
<path d="M264.8 1208.4 L268.2 1206 L268.2 1210.8 Z M281.4 1208.4 L278 1206 L278 1210.8 Z" fill="#fff" stroke="none"/>
<path d="M537.6 1206.2 L533.4 1200.4 Q532.2 1198.4 534 1197.6 Q535.6 1197 537 1198.8 L539.2 1201.4 L537.4 1191.8 Q537.2 1190 538.8 1189.8 Q540.4 1189.6 540.8 1191.4 L542.2 1197.6 L542.4 1189.8 Q542.6 1188.2 544.2 1188.2 Q545.8 1188.2 545.9 1189.8 L546.2 1197.6 L548 1191 Q548.6 1189.4 550.1 1189.8 Q551.6 1190.2 551.3 1192 L549.8 1199 L552.2 1195.4 Q553.2 1194.2 554.4 1195 Q555.6 1195.8 554.8 1197.4 L551 1206.4 Q549.4 1210.8 545 1211 L542.6 1211 Q539.6 1210.4 537.6 1206.2 Z" stroke-width="1.5" stroke-linejoin="round"/>
<path d="M585 1188.6 L585 1209.4 L590 1205.4 L593.2 1210.8 L596 1209.4 L593.2 1204.4 L599.2 1203.4 Z" stroke-width="1.6" stroke-linejoin="miter"/>
<path d="M634.2 1187.8 L634.2 1211.6 M629.4 1187.8 L639 1187.8 M629.4 1211.6 L639 1211.6" stroke-width="1.5"/>
<text x="643.3" y="1205" font-size="14.2" fill="#fff" stroke="none" text-anchor="middle" font-family="'Liberation Sans',sans-serif">A</text>
<circle cx="684.9" cy="1196.3" r="8.5" stroke-width="1.7"/>
<path d="M691 1202.4 L700.8 1211.6" stroke-width="1.8"/>
<path d="M681.8 1193.6 L688 1193.6 M684.9 1190.6 L684.9 1196.6 M681.8 1199.4 L688 1199.4" stroke-width="1.3"/>
<path d="M730.4 1192.6 L730.4 1206.4 M733 1199.5 L742.2 1192.9 L742.2 1206.1 Z" stroke="#5c5c5c" stroke-width="1.5"/>
<path d="M780.8 1199.5 L789.8 1192.9 L789.8 1206.1 Z" stroke="#5c5c5c" stroke-width="1.5"/>
<path d="M1183.4 1199.5 L1174.6 1192.9 L1174.6 1206.1 Z" stroke="#5c5c5c" stroke-width="1.5"/>
<path d="M1230.4 1199.5 L1221.4 1192.9 L1221.4 1206.1 Z M1233.3 1192.6 L1233.3 1206.4" stroke="#5c5c5c" stroke-width="1.5"/>
<path d="M1254 1187.7 L1254 1212.3" stroke="#777" stroke-width="1.3"/>
<circle cx="1280.6" cy="1199.6" r="12.1" stroke-width="1.7"/>
<path d="M1274.8 1199.6 L1282.8 1194 L1282.8 1205.2 Z" stroke-width="1.5"/>
<circle cx="1329.1" cy="1199.6" r="12.1" stroke="#5c5c5c" stroke-width="1.6"/>
<path d="M1335.3 1199.6 L1327 1194 L1327 1205.2 Z" stroke="#5c5c5c" stroke-width="1.5"/>
<path d="M1224.2 1235.9 L1224.2 1260 M1231.8 1235.9 L1231.8 1260 M1239.5 1235.9 L1239.5 1260 M1219.4 1240.7 L1243.4 1240.7 M1219.4 1248.5 L1243.4 1248.5 M1219.4 1256.3 L1243.4 1256.3" stroke-width="1.8"/>
<path d="M1272.7 1235.9 L1272.7 1260 M1280.3 1235.9 L1280.3 1246.5 M1286.6 1235.9 L1286.6 1244 M1268.2 1240.7 L1291.5 1240.7 M1268.2 1248.5 L1277.4 1248.5 M1268.2 1256.3 L1277.4 1256.3" stroke-width="1.7"/>
<path d="M1279.8 1250.2 L1287.2 1250.2 A5.2 5.2 0 0 1 1287.2 1260.6 L1279.8 1260.6" stroke-width="3.7" stroke="#fff"/><path d="M1281.0 1250.2 L1287.2 1250.2 A5.2 5.2 0 0 1 1287.2 1260.6 L1281.0 1260.6" stroke-width="0.9" stroke="#1b5a89" stroke-linecap="butt"/>
<path d="M1326 1260.6 L1319.6 1260.6 L1319.6 1237.9 L1331.2 1237.9 L1338.6 1245.2 L1338.6 1247.4 M1331.2 1237.9 L1331.2 1245.2 L1338.6 1245.2" stroke-width="1.6" stroke-linejoin="round"/>
<path d="M1327.8 1250.2 L1335.2 1250.2 A5.2 5.2 0 0 1 1335.2 1260.6 L1327.8 1260.6" stroke-width="3.7" stroke="#fff"/><path d="M1329.0 1250.2 L1335.2 1250.2 A5.2 5.2 0 0 1 1335.2 1260.6 L1329.0 1260.6" stroke-width="0.9" stroke="#1b5a89" stroke-linecap="butt"/>
<path d="M1367.4 1253.6 L1382.8 1237.7 L1389.4 1244 L1386 1247.4 M1367.4 1253.6 L1372 1258" stroke-width="1.6"/>
<path d="M1366.6 1255.4 L1370.2 1259" stroke-width="3.4"/>
<path d="M1376.4 1250.2 L1383.8 1250.2 A5.2 5.2 0 0 1 1383.8 1260.6 L1376.4 1260.6" stroke-width="3.7" stroke="#fff"/><path d="M1377.6 1250.2 L1383.8 1250.2 A5.2 5.2 0 0 1 1383.8 1260.6 L1377.6 1260.6" stroke-width="0.9" stroke="#1b5a89" stroke-linecap="butt"/>
<path d="M1415.9 1251.7 L1431 1236 L1437.6 1241.8 L1434.2 1245.2 M1415.9 1251.7 L1421.8 1257" stroke-width="1.6"/>
<path d="M1414.4 1255.4 L1417.6 1258.8" stroke-width="3.6"/>
<path d="M1428 1252 A5.4 5.4 0 1 0 1437.2 1253.2" stroke="#1f84de" stroke-width="1.7"/>
<path d="M1433.6 1248 L1439.2 1250.2 L1436.4 1254.6 Z" fill="#1f84de" stroke="none"/>
<rect x="1463" y="1237.8" width="22.4" height="22.4" stroke-width="2"/>
<path d="M1463 1240.6 L1485.4 1240.6" stroke="#d8d8d8" stroke-width="1.5"/>
<path d="M1467.2 1246.7 L1482.4 1246.7 M1478.6 1242.8 L1482.6 1246.7 L1478.6 1250.6 M1481 1253.6 L1465.9 1253.6 M1469.8 1249.7 L1465.8 1253.6 L1469.8 1257.5" stroke-width="1.5"/>
<path d="M1502.2 1246.6 L1508.0 1252.2 L1513.9 1246.6" stroke-width="2.2"/>
</svg>
<span class="t" style="left:25.00px;top:4.00px;font-size:18.00px;font-weight:normal;color:#fff;letter-spacing:-0.337px;-webkit-text-stroke:0.2px #fff;">Revu</span>
<span class="t" style="left:105.50px;top:4.00px;font-size:18.00px;font-weight:normal;color:#fff;letter-spacing:-0.166px;-webkit-text-stroke:0.2px #fff;">File</span>
<span class="t" style="left:174.50px;top:4.00px;font-size:18.00px;font-weight:normal;color:#fff;letter-spacing:-0.171px;-webkit-text-stroke:0.2px #fff;">Edit</span>
<span class="t" style="left:244.00px;top:4.00px;font-size:18.00px;font-weight:normal;color:#fff;letter-spacing:0.755px;-webkit-text-stroke:0.2px #fff;">View</span>
<span class="t" style="left:321.50px;top:4.00px;font-size:18.00px;font-weight:normal;color:#fff;letter-spacing:0.351px;-webkit-text-stroke:0.2px #fff;">Document</span>
<span class="t" style="left:443.50px;top:4.00px;font-size:18.00px;font-weight:normal;color:#fff;letter-spacing:0.119px;-webkit-text-stroke:0.2px #fff;">Batch</span>
<span class="t" style="left:529.00px;top:4.00px;font-size:18.00px;font-weight:normal;color:#fff;letter-spacing:0.497px;-webkit-text-stroke:0.2px #fff;">Tools</span>
<span class="t" style="left:610.50px;top:4.00px;font-size:18.00px;font-weight:normal;color:#fff;letter-spacing:0.388px;-webkit-text-stroke:0.2px #fff;">Window</span>
<span class="t" style="left:715.00px;top:4.00px;font-size:18.00px;font-weight:normal;color:#fff;letter-spacing:0.158px;-webkit-text-stroke:0.2px #fff;">Help</span>
<span class="t" style="left:1579.80px;top:5.00px;font-size:17.60px;font-weight:normal;color:#fff;letter-spacing:-0.203px;-webkit-text-stroke:0.7px #fff;">taimoor@brightergraphics.com</span>
<span class="t" style="left:85.80px;top:46.00px;font-size:16.80px;font-weight:bold;color:#fff;letter-spacing:-0.389px;">Name:</span>
<span class="t" style="left:139.80px;top:46.00px;font-size:16.80px;font-weight:normal;color:#fff;letter-spacing:-0.375px;">Brighter Graphics - Floor Plan 1</span>
<span class="t" style="left:380.00px;top:46.00px;font-size:16.80px;font-weight:bold;color:#fff;letter-spacing:-0.697px;">Pages:</span>
<span class="t" style="left:436.80px;top:46.00px;font-size:16.80px;font-weight:normal;color:#fff;letter-spacing:-3.141px;">1</span>
<span class="t" style="left:61.70px;top:96.00px;font-size:16.80px;font-weight:normal;color:#fff;letter-spacing:-0.302px;">Brighter Graphics - Floor Plan 1*</span>
<span class="t" style="left:104.10px;top:153.00px;font-size:17.60px;font-weight:bold;color:#fff;letter-spacing:-0.924px;">Define:</span>
<span class="t" style="left:523.10px;top:153.00px;font-size:17.60px;font-weight:bold;color:#fff;letter-spacing:-0.792px;">Create:</span>
<span class="t" style="left:1075.00px;top:153.00px;font-size:17.40px;font-weight:normal;color:#fff;letter-spacing:-0.579px;">Apply</span>
<span class="t" style="left:1150.40px;top:153.00px;font-size:17.40px;font-weight:normal;color:#fff;letter-spacing:-0.798px;">Close</span>
<span class="t" style="left:917.30px;top:1192.00px;font-size:16.80px;font-weight:normal;color:#fff;letter-spacing:-0.336px;">Floor Plan (1 of 1)</span>
<span class="t" style="left:1620.20px;top:1190.00px;font-size:18.40px;font-weight:normal;color:#fff;letter-spacing:-0.143px;">106.68 x 76.20 cm</span>
<span class="t" style="left:1797.60px;top:1190.00px;font-size:18.40px;font-weight:normal;color:#fff;letter-spacing:-0.220px;">9.525 cm = 30'-0&quot;</span>
<span class="t" style="left:1547.80px;top:1241.00px;font-size:16.80px;font-weight:normal;color:#fff;letter-spacing:-0.328px;">9.525 cm = 30'-0&quot;</span>
<span class="t" style="left:1706.00px;top:1241.00px;font-size:16.80px;font-weight:normal;color:#fff;letter-spacing:-0.264px;">106.68 x 76.20 cm</span>
<span class="t" style="left:1890.40px;top:1241.00px;font-size:16.80px;font-weight:normal;color:#fff;letter-spacing:-0.205px;">(7.83, 47.45)</span>
<span class="t" style="left:1.40px;top:1241.00px;font-size:16.90px;font-weight:normal;color:#fff;letter-spacing:-0.122px;">Select region containing markups</span>
</body></html>
